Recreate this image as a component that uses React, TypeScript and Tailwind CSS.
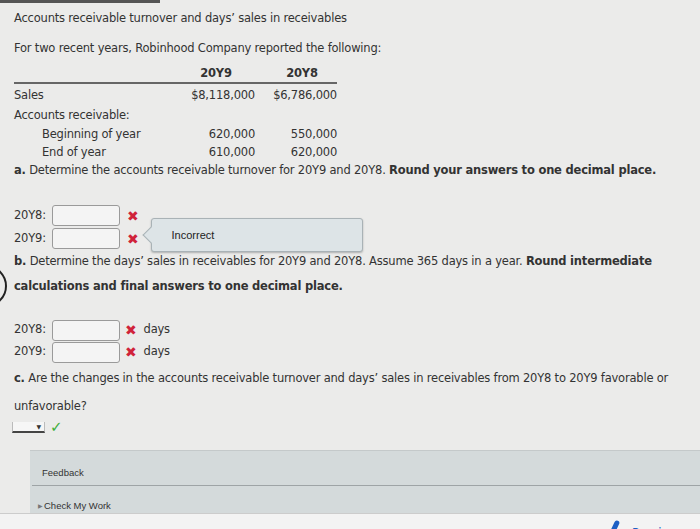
import React from 'react';

const font = { fontFamily: '"DejaVu Sans", Verdana, sans-serif' };
const arial = { fontFamily: '"Liberation Sans", Arial, sans-serif' };

function RedX({ className = '' }: { className?: string }) {
  return <span className={`text-[#d0223a] text-[14px] leading-none ${className}`}>✖</span>;
}

function AnswerBox() {
  return <div className="w-[68px] h-[21px] bg-[#f4f4f4] border border-[#9a9a9a] rounded-[3px]" />;
}

export default function App() {
  return (
    <div className="w-[700px] h-[529px] overflow-hidden bg-[#ebebea] text-[#333] relative" style={font}>
      {/* top edge of the window */}
      <div className="h-[3px] w-[160px] bg-[#555]" />

      <div className="pl-[14px] pr-4 text-[11.5px] tracking-[-0.2px]">
        <div className="mt-[5px] leading-[20px]">Accounts receivable turnover and days’ sales in receivables</div>

        <div className="mt-[10px] leading-[20px]">For two recent years, Robinhood Company reported the following:</div>

        {/* table */}
        <div className="w-[323px] mt-[6px]">
          <div className="flex leading-[18px] font-bold border-b-2 border-[#666]">
            <div className="flex-1" />
            <div className="w-[100px] text-center pl-[30px]">20Y9</div>
            <div className="w-[86px] text-center pl-[16px]">20Y8</div>
          </div>
          <div className="flex leading-[20px] mt-[1px]">
            <div className="flex-1">Sales</div>
            <div className="w-[100px] text-right pr-[1px]">$8,118,000</div>
            <div className="w-[81px] text-right">$6,786,000</div>
          </div>
          <div className="flex leading-[20px]">
            <div className="flex-1">Accounts receivable:</div>
          </div>
          <div className="flex leading-[18px]">
            <div className="flex-1 pl-[28px]">Beginning of year</div>
            <div className="w-[100px] text-right pr-[1px]">620,000</div>
            <div className="w-[81px] text-right">550,000</div>
          </div>
          <div className="flex leading-[18px]">
            <div className="flex-1 pl-[28px]">End of year</div>
            <div className="w-[100px] text-right pr-[1px]">610,000</div>
            <div className="w-[81px] text-right">620,000</div>
          </div>
        </div>

        <div className="leading-[18px] whitespace-nowrap">
          <span className="font-bold">a.</span> Determine the accounts receivable turnover for 20Y9 and 20Y8.{' '}
          <span className="font-bold">Round your answers to one decimal place.</span>
        </div>

        {/* part a answers */}
        <div className="flex items-start h-[44px] mt-[26px]">
          <div className="flex flex-col gap-[2px]">
            <div className="flex items-center h-[21px]">
              <span className="w-[38px]">20Y8:</span>
              <AnswerBox />
              <RedX className="ml-[7px]" />
            </div>
            <div className="flex items-center h-[21px]">
              <span className="w-[38px]">20Y9:</span>
              <AnswerBox />
              <RedX className="ml-[7px]" />
            </div>
          </div>
          <div className="relative ml-[12px] mt-[13px] w-[212px] h-[34px] bg-[#dde4e7] border border-[#a9b2b6] rounded-[3px] shadow-[0_1px_2px_rgba(0,0,0,0.25)] flex items-center pl-[20px] shrink-0">
            <div className="absolute -left-[7px] top-[10px] w-[12px] h-[12px] bg-[#dde4e7] border-l border-b border-[#a9b2b6] rotate-45" />
            <span className="text-[11px] text-[#222] tracking-normal" style={arial}>
              Incorrect
            </span>
          </div>
        </div>

        <div className="relative leading-[25px]">
          <div className="absolute -left-[49px] top-[16px] w-[42px] h-[42px] rounded-full border-2 border-[#222]" />
          <span className="font-bold">b.</span> Determine the days’ sales in receivables for 20Y9 and 20Y8. Assume 365 days in a year.{' '}
          <span className="font-bold">Round intermediate calculations and final answers to one decimal place.</span>
        </div>

        {/* part b answers */}
        <div className="flex flex-col mt-[20px]">
          <div className="flex items-center h-[22px]">
            <span className="w-[38px]">20Y8:</span>
            <AnswerBox />
            <RedX className="ml-[5px]" />
            <span className="ml-[7px]">days</span>
          </div>
          <div className="flex items-center h-[22px]">
            <span className="w-[38px]">20Y9:</span>
            <AnswerBox />
            <RedX className="ml-[5px]" />
            <span className="ml-[7px]">days</span>
          </div>
        </div>

        <div className="mt-[1px] leading-[28px]">
          <span className="font-bold">c.</span> Are the changes in the accounts receivable turnover and days’ sales in receivables from 20Y8 to 20Y9 favorable or unfavorable?
        </div>

        <div className="flex items-center gap-[5px] -ml-[2px]">
          <div className="w-[33px] h-[11px] bg-[#f6f6f6] border-b-2 border-[#444] border-x border-x-[#bbb] flex items-center justify-end pr-[3px]">
            <span className="text-[6px] text-[#333]">▼</span>
          </div>
          <span className="text-[#3fae3a] font-bold text-[15px] leading-none">✓</span>
        </div>
      </div>

      {/* feedback panel */}
      <div className="ml-[30px] mt-[15px] h-[63px] bg-[#d4dadb] border-t border-[#c4c9ca]" style={arial}>
        <div className="pl-[12px] pt-[15px] text-[9.5px] text-[#333] h-[34px]">Feedback</div>
        <div className="ml-[2px] h-px bg-[#9ea4a6]" />
        <div className="pl-[8px] pt-[13px] text-[9.5px] text-[#333] flex items-center">
          <span className="text-[6px] text-[#777] mr-[1px]">▶</span>Check My Work
        </div>
      </div>

      {/* bottom navigation */}
      <div className="h-[30px] bg-[#f3f3f3] border-t border-[#ccc] relative">
        <div className="absolute left-[612px] top-[6px] w-[5px] h-[16px] bg-[#1d5fc4] rotate-[25deg] rounded-sm" />
        <span className="absolute left-[632px] top-[10px] text-[12px] text-[#1d5fc4]" style={font}>Previous</span>
      </div>
    </div>
  );
}
